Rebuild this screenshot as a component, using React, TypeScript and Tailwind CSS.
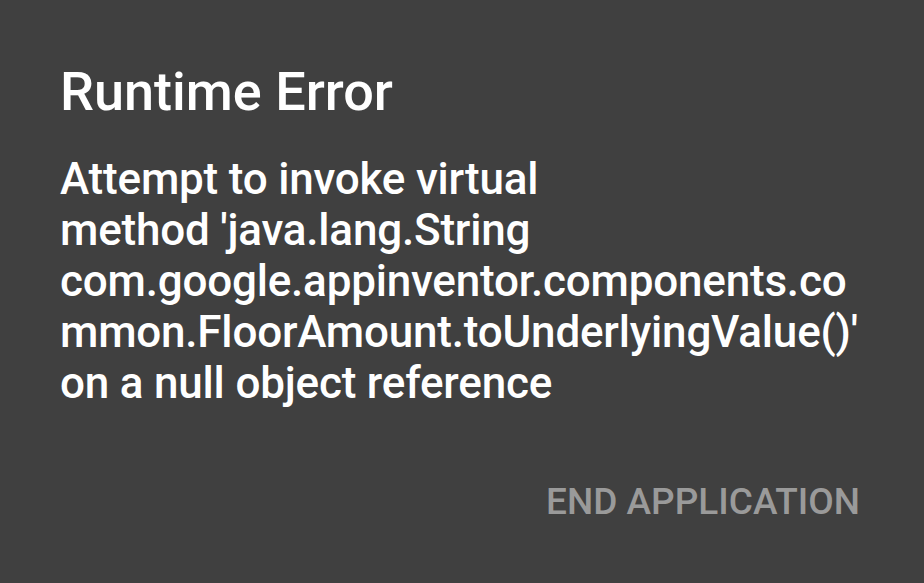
export default function App() {
  return (
    <div
      className="w-[924px] h-[583px] bg-[#404040] flex flex-col pl-[60px] pr-[64px] pt-[62px]"
      style={{ fontFamily: 'Roboto, "Noto Sans", sans-serif' }}
    >
      <h1 className="text-white text-[54px] leading-[60px] font-medium">Runtime Error</h1>
      <p className="mt-[32px] text-white text-[44px] leading-[51px] font-medium tracking-[-0.2px]">
        Attempt to invoke virtual
        <br />
        method 'java.lang.String
        <br />
        com.google.appinventor.components.co
        <br />
        mmon.FloorAmount.toUnderlyingValue()'
        <br />
        on a null object reference
      </p>
      <div className="mt-auto mb-[57px] flex justify-end">
        <button className="text-[#9a9a9a] text-[37px] leading-[48px] font-medium">END APPLICATION</button>
      </div>
    </div>
  );
}
